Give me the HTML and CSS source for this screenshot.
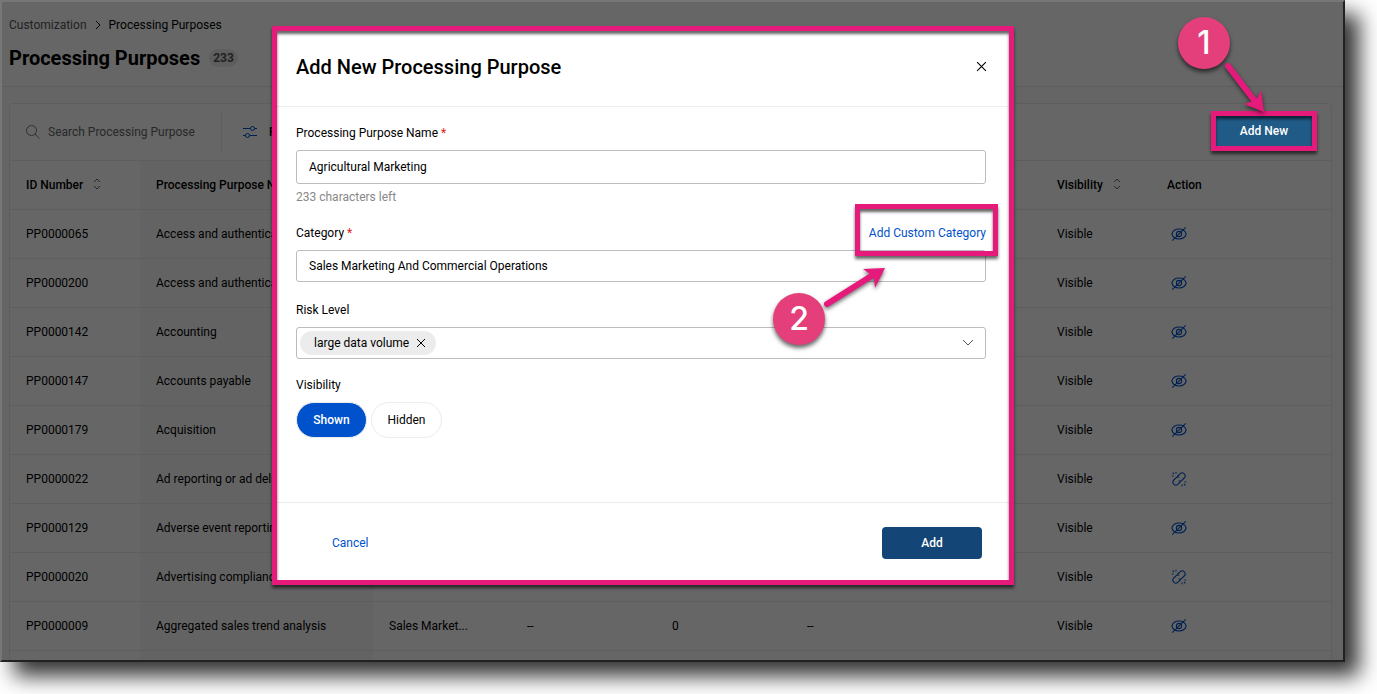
FILE: index.html
```html
<!DOCTYPE html>
<html lang="en">
<head>
  <meta charset="UTF-8" />
  <meta name="viewport" content="width=device-width, initial-scale=1.0" />
  <title>Processing Purposes</title>
  <link rel="stylesheet" href="styles.css">
</head>
<body>
  <svg width="0" height="0" class="sprite" aria-hidden="true">
    <symbol id="icon-hide" viewBox="0 0 16 16">
      <path d="M.8 8C1.800 4.800 4.800 3 8 3S14.200 4.800 15.200 8C14.200 11.200 11.200 13 8 13S1.800 11.200 .8 8Z" />
      <circle cx="8" cy="8" r="2.600" />
      <path d="M1.300 14.700 14.700 1.300" />
    </symbol>
    <symbol id="icon-unlink" viewBox="0 0 16 16">
      <path d="M6.300 5.500 9 2.800a2.900 2.900 0 0 1 4.200 4.200L10.800 9.400a2.400 2.400 0 0 1-3 .2" />
      <path d="M9.700 10.500 7 13.200a2.900 2.900 0 0 1-4.200-4.200L5.200 6.600a2.400 2.400 0 0 1 3-.2" />
      <path d="M5 .8v1.700M.8 5h1.700M1.700 1.700l1.300 1.300M11 13.500v1.700M13.500 11h1.700M13 13l1.300 1.300" />
    </symbol>
    <symbol id="icon-sort" viewBox="0 0 8 12">
      <path d="M1 4 4 1l3 3M1 8l3 3 3-3" />
    </symbol>
    <symbol id="icon-close" viewBox="0 0 10 10">
      <path d="M1 1l8 8M9 1 1 9" />
    </symbol>
  </svg>

  <div class="window">
    <header class="page-header">
      <nav class="breadcrumb" aria-label="Breadcrumb">
        <a href="#">Customization</a>
        <svg width="6" height="10" viewBox="0 0 6 10"><path d="M1 1l4 4-4 4" /></svg>
        <span>Processing Purposes</span>
      </nav>
      <div class="page-title">
        <h1>Processing Purposes</h1>
        <span class="count">233</span>
      </div>
    </header>

    <main class="card">
      <div class="toolbar">
        <label class="search">
          <svg width="14" height="14" viewBox="0 0 14 14"><circle cx="5.500" cy="5.500" r="5" /><path d="M9 9l4.500 4.500" /></svg>
          <input type="text" placeholder="Search Processing Purpose" aria-label="Search Processing Purpose" />
        </label>
        <button class="filter">
          <svg width="14" height="12" viewBox="0 0 14 12"><path d="M0 2.500h7.500M11.500 2.500H14M0 9.500h2.500M6.500 9.500H14" /><circle cx="9.500" cy="2.500" r="2" /><circle cx="4.500" cy="9.500" r="2" /></svg>
          Filter
        </button>
        <div class="add-new marked">
          <button>Add New</button>
          <span class="step step-1">1</span>
          <svg class="arrow arrow-1" width="46" height="58" viewBox="0 0 46 58">
            <path class="shaft" d="M6 6 32 40" />
            <path d="M42 52 22 44 31 41 36 37 39 30Z" />
          </svg>
        </div>
      </div>

      <div class="table-wrap">
        <table>
          <colgroup>
            <col class="col-id" />
            <col class="col-name" />
            <col class="col-category" />
            <col class="col-risk" />
            <col class="col-count" />
            <col class="col-notes" />
            <col class="col-visibility" />
            <col class="col-action" />
          </colgroup>
          <thead>
            <tr>
              <th>ID Number <svg class="sort"><use href="#icon-sort" /></svg></th>
              <th>Processing Purpose Name</th>
              <th></th>
              <th></th>
              <th></th>
              <th></th>
              <th>Visibility <svg class="sort"><use href="#icon-sort" /></svg></th>
              <th>Action</th>
            </tr>
          </thead>
          <tbody>
            <tr>
              <td>PP0000065</td><td>Access and authentication</td><td></td><td></td><td></td><td></td><td>Visible</td>
              <td><button aria-label="Hide"><svg><use href="#icon-hide" /></svg></button></td>
            </tr>
            <tr>
              <td>PP0000200</td><td>Access and authentication</td><td></td><td></td><td></td><td></td><td>Visible</td>
              <td><button aria-label="Hide"><svg><use href="#icon-hide" /></svg></button></td>
            </tr>
            <tr>
              <td>PP0000142</td><td>Accounting</td><td></td><td></td><td></td><td></td><td>Visible</td>
              <td><button aria-label="Hide"><svg><use href="#icon-hide" /></svg></button></td>
            </tr>
            <tr>
              <td>PP0000147</td><td>Accounts payable</td><td></td><td></td><td></td><td></td><td>Visible</td>
              <td><button aria-label="Hide"><svg><use href="#icon-hide" /></svg></button></td>
            </tr>
            <tr>
              <td>PP0000179</td><td>Acquisition</td><td></td><td></td><td></td><td></td><td>Visible</td>
              <td><button aria-label="Hide"><svg><use href="#icon-hide" /></svg></button></td>
            </tr>
            <tr>
              <td>PP0000022</td><td>Ad reporting or ad delivery</td><td></td><td></td><td></td><td></td><td>Visible</td>
              <td><button aria-label="Unlink"><svg><use href="#icon-unlink" /></svg></button></td>
            </tr>
            <tr>
              <td>PP0000129</td><td>Adverse event reporting</td><td></td><td></td><td></td><td></td><td>Visible</td>
              <td><button aria-label="Hide"><svg><use href="#icon-hide" /></svg></button></td>
            </tr>
            <tr>
              <td>PP0000020</td><td>Advertising compliance</td><td></td><td></td><td></td><td></td><td>Visible</td>
              <td><button aria-label="Unlink"><svg><use href="#icon-unlink" /></svg></button></td>
            </tr>
            <tr>
              <td>PP0000009</td><td>Aggregated sales trend analysis</td><td>Sales Market...</td><td>--</td><td>0</td><td>--</td><td>Visible</td>
              <td><button aria-label="Hide"><svg><use href="#icon-hide" /></svg></button></td>
            </tr>
            <tr>
              <td></td><td></td><td></td><td></td><td></td><td></td><td></td><td></td>
            </tr>
          </tbody>
        </table>
      </div>
    </main>

    <div class="backdrop"></div>

    <div class="modal-layer">
      <form class="modal marked" role="dialog" aria-labelledby="modal-title">
        <div class="modal-header">
          <h2 id="modal-title">Add New Processing Purpose</h2>
          <button type="button" class="close" aria-label="Close"><svg width="11" height="11"><use href="#icon-close" /></svg></button>
        </div>

        <div class="modal-body">
          <div class="field">
            <label for="name">Processing Purpose Name <em>*</em></label>
            <input type="text" id="name" class="tall" value="Agricultural Marketing" />
            <small>233 characters left</small>
          </div>

          <div class="field">
            <div class="label-row">
              <label for="category">Category <em>*</em></label>
              <div class="custom-category marked">
                <a href="#">Add Custom Category</a>
                <span class="step step-2">2</span>
                <svg class="arrow arrow-2" width="70" height="50" viewBox="0 0 70 50">
                  <path class="shaft" d="M6 41 52 12" />
                  <path d="M64 5 42 6 49 11 53 16 54 25Z" />
                </svg>
              </div>
            </div>
            <input type="text" id="category" value="Sales Marketing And Commercial Operations" />
          </div>

          <div class="field">
            <label for="risk">Risk Level</label>
            <div class="multi-select">
              <span class="chip">large data volume <button type="button" aria-label="Remove"><svg width="10" height="10"><use href="#icon-close" /></svg></button></span>
              <input type="text" id="risk" />
              <svg class="chevron" width="12" height="8" viewBox="0 0 12 8"><path d="M1 1l5 5 5-5" /></svg>
            </div>
          </div>

          <fieldset>
            <legend>Visibility</legend>
            <div class="pills">
              <label><input type="radio" name="visibility" checked /><span>Shown</span></label>
              <label><input type="radio" name="visibility" /><span>Hidden</span></label>
            </div>
          </fieldset>
        </div>

        <div class="modal-footer">
          <button type="button" class="cancel">Cancel</button>
          <button type="submit" class="submit">Add</button>
        </div>
      </form>
    </div>
  </div>
</body>
</html>
```
FILE: styles.css
```css
:root {
  --pink: #e61a7b;
  --blue: #0052cc;
  --line: #ececec;
  --field: #bcbcbc;
}
* {
  margin: 0;
  padding: 0;
  box-sizing: border-box;
}
body {
  min-height: 100vh;
  font-family: Roboto, sans-serif;
  font-size: 12px;
  line-height: 16px;
  color: #000;
  background: #fff;
  overflow: hidden;
}
svg {
  fill: none;
  stroke: currentColor;
  flex: none;
}
button, input {
  font: inherit;
  color: inherit;
  background: none;
  border: none;
}
button {
  cursor: pointer;
}
a {
  text-decoration: none;
}
.sprite {
  position: absolute;
}
.window {
  position: relative;
  height: calc(100vh - 32px);
  margin-right: 32px;
  border: 2px solid #777;
  border-right-color: #222;
  border-bottom-color: #222;
  box-shadow: 14px 14px 20px rgba(0, 0, 0, 0.8);
  background: #fcfcfc;
  display: flex;
  flex-direction: column;
}

/* page header */
.page-header {
  padding: 15px 7px 0;
  height: 85px;
  flex: none;
  background: #fff;
  border-bottom: 1px solid var(--line);
}
.breadcrumb {
  display: flex;
  align-items: center;
  gap: 8px;
}
.breadcrumb a {
  color: #555;
}
.page-title {
  display: flex;
  align-items: center;
  gap: 9px;
  margin-top: 13px;
}
h1 {
  font-size: 20px;
  line-height: 24px;
  font-weight: 700;
}
.count {
  padding: 1px 4px;
  border-radius: 9px;
  background: #eaeaea;
  color: #555;
  font-weight: 700;
}

/* table card */
.card {
  flex: 1;
  min-height: 0;
  display: flex;
  flex-direction: column;
  margin: 16px 11px 0 7px;
  border: 1px solid var(--line);
  border-bottom: none;
  border-radius: 4px 4px 0 0;
  background: #fff;
}
.toolbar {
  display: flex;
  align-items: center;
  flex: none;
  height: 57px;
  padding: 0 19px 0 16px;
  border-bottom: 1px solid var(--line);
}
.table-wrap {
  flex: 1;
  min-height: 0;
  overflow: hidden;
}
.search {
  display: flex;
  align-items: center;
  gap: 8px;
  width: 196px;
  height: 40px;
  border-right: 1px solid var(--line);
  color: #777;
}
.search input {
  width: 160px;
}
.search input::placeholder {
  color: #666;
}
.filter {
  display: flex;
  align-items: center;
  gap: 12px;
  margin-left: 21px;
  font-weight: 500;
}
.filter svg {
  color: var(--blue);
}
.add-new {
  margin-left: auto;
  margin-bottom: 2px;
  z-index: 2;
}
.add-new button {
  display: block;
  width: 96px;
  height: 30px;
  background: #205a86;
  color: #fff;
  font-weight: 500;
}
table {
  width: 100%;
  table-layout: fixed;
  border-collapse: collapse;
}
.col-id { width: 130px; }
.col-name { width: 233px; }
.col-category { width: 138px; }
.col-risk { width: 145px; }
.col-count { width: 135px; }
.col-notes { width: 250px; }
.col-visibility { width: 110px; }
th, td {
  height: 49px;
  padding: 0 16px;
  text-align: left;
  white-space: nowrap;
  border-bottom: 1px solid var(--line);
}
th {
  height: 48px;
  font-weight: 500;
}
th:nth-child(2), td:nth-child(2) {
  background: #f8f8f8;
}
.sort {
  width: 8px;
  height: 12px;
  margin-left: 7px;
  vertical-align: -1px;
  color: #666;
}
td button {
  display: block;
  margin-left: 4px;
  color: var(--blue);
}
td svg {
  display: block;
  width: 16px;
  height: 16px;
  stroke-width: 1.1;
}

/* overlay and modal */
.backdrop {
  position: absolute;
  inset: 0;
  background: rgba(0, 0, 0, 0.6);
  z-index: 1;
}
.modal-layer {
  position: absolute;
  top: 29px;
  left: 275px;
  right: 334px;
  z-index: 3;
}
.modal {
  background: #fff;
}
.modal-header {
  display: flex;
  align-items: center;
  justify-content: space-between;
  height: 76px;
  padding: 0 22px 4px 19px;
  border-bottom: 1px solid var(--line);
}
h2 {
  font-size: 20px;
  line-height: 24px;
  font-weight: 500;
}
.close svg {
  display: block;
}
.modal-body {
  height: 395px;
  padding: 18px 23px 0 19px;
}
.field {
  display: flex;
  flex-direction: column;
  gap: 9px;
  margin-bottom: 20px;
}
.field > input, .multi-select {
  width: 100%;
  height: 32px;
  padding: 0 12px;
  border: 1px solid var(--field);
  border-radius: 3px;
}
.field > input.tall {
  height: 34px;
}
em {
  color: #e02020;
  font-style: normal;
}
small {
  font-size: 12px;
  margin-top: -4px;
  color: #888;
}
.label-row {
  display: flex;
  justify-content: space-between;
}
.custom-category a, .cancel {
  color: var(--blue);
}
.multi-select {
  display: flex;
  align-items: center;
  padding: 0 11px 0 3px;
}
.multi-select input {
  flex: 1;
  min-width: 0;
}
.chip {
  display: flex;
  align-items: center;
  gap: 7px;
  height: 24px;
  padding: 0 10px 0 14px;
  border-radius: 12px;
  background: #ececec;
}
.chip svg {
  display: block;
}
.chevron {
  color: #555;
}
fieldset {
  margin-top: -2px;
  border: none;
}
.pills {
  display: flex;
  gap: 4px;
  margin-top: 9px;
}
.pills input {
  position: absolute;
  opacity: 0;
}
.pills span {
  display: block;
  width: 71px;
  padding: 9px 0;
  border: 1px solid var(--line);
  border-radius: 18px;
  text-align: center;
}
.pills input:checked + span {
  background: var(--blue);
  color: #fff;
  font-weight: 500;
}
.modal-footer {
  display: flex;
  align-items: center;
  justify-content: space-between;
  height: 78px;
  padding: 3px 27px 0 55px;
  border-top: 1px solid var(--line);
}
.submit {
  width: 100px;
  height: 32px;
  border-radius: 4px;
  background: #134676;
  color: #fff;
  font-weight: 500;
}

/* walkthrough marks */
.marked {
  position: relative;
}
.marked::after {
  content: "";
  position: absolute;
  inset: -5px;
  border: 5px solid var(--pink);
  box-shadow: 0 3px 3px rgba(0, 0, 0, 0.6), inset 0 3px 3px rgba(0, 0, 0, 0.6);
  pointer-events: none;
}
.custom-category::after {
  inset: -21px -12px -15px -14px;
}
.step {
  position: absolute;
  width: 52px;
  height: 52px;
  border-radius: 50%;
  background: #e53f7b;
  box-shadow: 0 3px 4px rgba(0, 0, 0, 0.6);
  color: #fff;
  font: 500 32px/52px Inter, sans-serif;
  text-align: center;
  z-index: 1;
}
.step-1 {
  top: -99px;
  right: 82px;
}
.step-2 {
  top: 68px;
  right: 161px;
}
.arrow {
  position: absolute;
  fill: var(--pink);
  stroke: none;
  z-index: 1;
  overflow: visible;
  filter: drop-shadow(0 2px 2px rgba(0, 0, 0, 0.6));
}
.arrow .shaft {
  stroke: var(--pink);
  stroke-width: 6;
  stroke-linecap: round;
}
.arrow-1 {
  top: -56px;
  right: 44px;
}
.arrow-2 {
  top: 38px;
  right: 95px;
}
```
